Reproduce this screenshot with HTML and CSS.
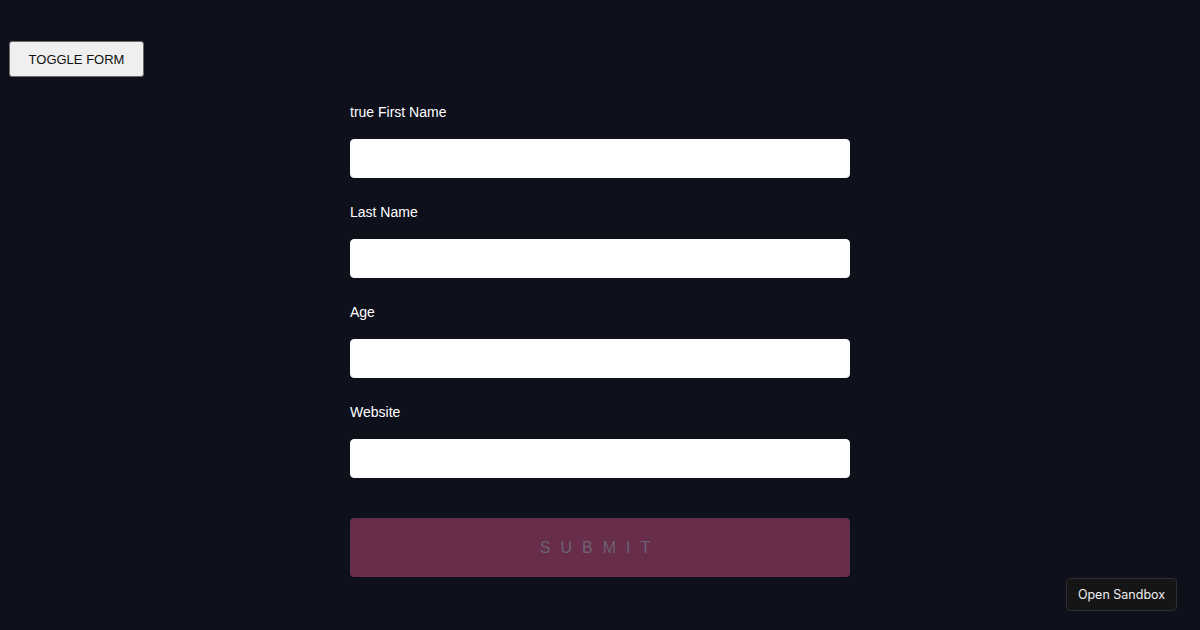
FILE: index.html
```html
<!DOCTYPE html>
<html>
<head>
<meta charset="utf-8">
<link rel="stylesheet" href="styles.css">
</head>
<body>
<div class="toolbar">
  <button class="toggle" type="button">TOGGLE FORM</button>
</div>
<form class="form">
  <label class="label">true First Name</label>
  <input class="field" type="text">
  <label class="label">Last Name</label>
  <input class="field" type="text">
  <label class="label">Age</label>
  <input class="field" type="text">
  <label class="label">Website</label>
  <input class="field" type="text">
  <button class="submit" type="button">Submit</button>
</form>
<button class="sandbox" type="button">Open Sandbox</button>
</body>
</html>
```
FILE: styles.css
```css
html, body {
  margin: 0;
  padding: 0;
  background: #0e101c;
  font-family: "Liberation Sans", Arial, sans-serif;
  height: 100%;
  overflow: hidden;
}
.toolbar {
  padding: 41px 0 0 9px;
}
.toggle {
  display: block;
  box-sizing: border-box;
  width: 135px;
  height: 36px;
  margin: 0;
  padding: 0;
  background: #efefef;
  border: 1px solid #6b6b6b;
  border-radius: 3px;
  color: #111;
  font-family: "Liberation Sans", Arial, sans-serif;
  font-size: 13px;
}
.form {
  display: flow-root;
  width: 500px;
  margin: 1px auto 0;
}
.label {
  display: block;
  color: #ffffff;
  font-size: 14px;
  line-height: 28px;
  margin: 20px 0 13px;
}
.field {
  display: block;
  box-sizing: border-box;
  width: 100%;
  height: 39px;
  margin: 0 0 10px;
  padding: 10px 15px;
  border: 1px solid #ffffff;
  border-radius: 4px;
  background: #ffffff;
  font-size: 14px;
}
.submit {
  display: block;
  box-sizing: border-box;
  width: 100%;
  height: 59px;
  margin: 40px 0 0;
  padding: 0;
  border: none;
  border-radius: 4px;
  background: #672d4a;
  color: #6c6273;
  font-family: "Liberation Sans", Arial, sans-serif;
  font-size: 16px;
  text-transform: uppercase;
  letter-spacing: 10px;
}
.sandbox {
  position: fixed;
  right: 23px;
  bottom: 19px;
  box-sizing: border-box;
  width: 111px;
  height: 33px;
  padding: 0;
  background: #151515;
  border: 1px solid #2e2e2e;
  border-radius: 4px;
  color: #f0f0f0;
  font-family: Inter, "Liberation Sans", sans-serif;
  font-size: 12.5px;
}
```
